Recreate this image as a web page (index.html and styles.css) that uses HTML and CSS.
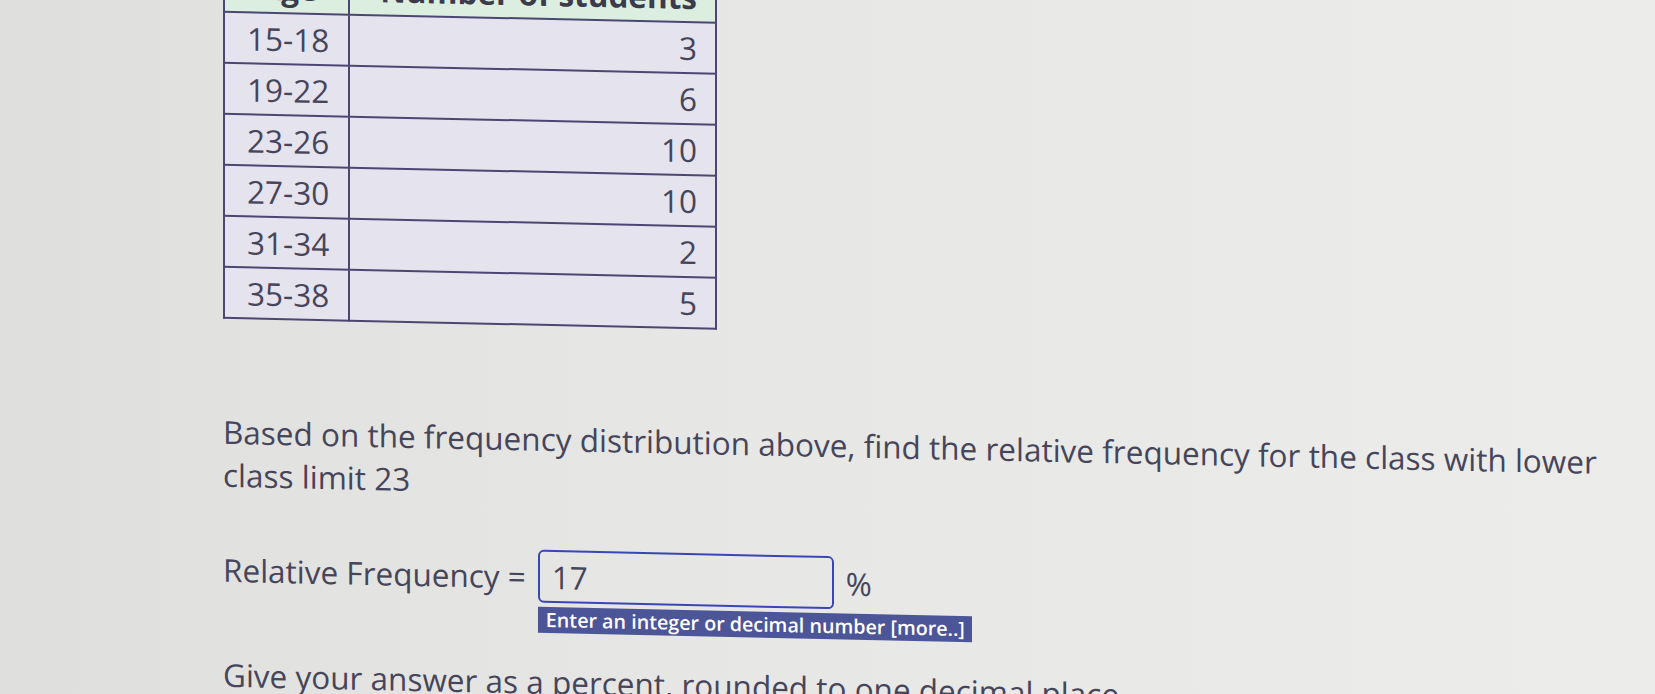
FILE: index.html
```html
<!DOCTYPE html>
<html lang="en">
<head>
<meta charset="utf-8">
<title>Relative frequency question</title>
<link rel="stylesheet" href="styles.css">
</head>
<body>
<div class="page">
  <table class="freq">
    <colgroup><col class="col-class"><col class="col-count"></colgroup>
    <thead>
      <tr><th class="head-class">Age</th><th class="head-count">Number of students</th></tr>
    </thead>
    <tbody>
      <tr><td class="cls">15-18</td><td class="num">3</td></tr>
      <tr><td class="cls">19-22</td><td class="num">6</td></tr>
      <tr><td class="cls">23-26</td><td class="num">10</td></tr>
      <tr><td class="cls">27-30</td><td class="num">10</td></tr>
      <tr><td class="cls">31-34</td><td class="num">2</td></tr>
      <tr><td class="cls">35-38</td><td class="num">5</td></tr>
    </tbody>
  </table>

  <p class="question">Based on the frequency distribution above, find the relative frequency for the class with lower class limit 23</p>

  <div class="answer-row">
    <span class="label">Relative Frequency =</span>
    <div class="field">
      <input class="answer" type="text" value="17" readonly>
      <div class="hint">Enter an integer or decimal number [more..]</div>
    </div>
    <span class="unit">%</span>
  </div>

  <p class="note">Give your answer as a percent, rounded to one decimal place</p>
</div>
</body>
</html>
```

FILE: styles.css
```css
html, body {
  margin: 0;
  height: 100%;
  overflow: hidden;
}

body {
  background: linear-gradient(90deg, #dfdfdd 0%, #e7e7e5 45%, #ececea 100%);
  font-family: "Open Sans", "DejaVu Sans", sans-serif;
  color: #46455a;
}

.page {
  padding-left: 223px;
  margin-top: -45px;
  transform: skewY(1.25deg);
  transform-origin: 0 0;
}

.freq {
  border-collapse: collapse;
  width: 494px;
  font-size: 31.5px;
}

.col-class { width: 125px; }

.freq th,
.freq td {
  border: 2px solid #4b4770;
  height: 49px;
  padding: 0 18px 0 22px;
  background: #e4e3ee;
  vertical-align: middle;
  white-space: nowrap;
}

.freq th {
  background: #dbeee0;
  font-weight: 700;
  color: #3c3b4c;
}

.head-class { text-align: center; }
.head-count { text-align: right; }

.cls { text-align: left; }
.num { text-align: right; }

.question {
  margin: 91px 0 0;
  width: 1410px;
  font-size: 31.5px;
  line-height: 43px;
}

.answer-row {
  display: flex;
  align-items: baseline;
  margin-top: 47px;
  font-size: 31.5px;
  line-height: 47px;
}

.label {
  margin-right: 12px;
}

.field {
  display: flex;
  flex-direction: column;
  gap: 4px;
  width: 296px;
}

.answer {
  width: 296px;
  height: 53px;
  box-sizing: border-box;
  border: 2.5px solid #3a46b6;
  border-radius: 6px;
  padding: 0 0 0 12px;
  margin: 0;
  font: inherit;
  font-size: 31.5px;
  color: #46455a;
  background: transparent;
  outline: none;
}

.hint {
  width: 434px;
  height: 26px;
  box-sizing: border-box;
  padding-left: 8px;
  background: #4c5597;
  color: #ffffff;
  font-size: 19.7px;
  font-weight: 600;
  line-height: 26px;
  white-space: nowrap;
}

.unit {
  margin-left: 12px;
}

.note {
  margin: 25px 0 0;
  font-size: 31.5px;
  line-height: 47px;
}
```
